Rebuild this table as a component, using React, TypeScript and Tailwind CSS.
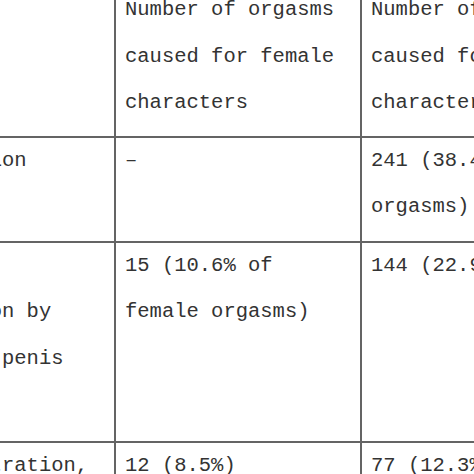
import React from 'react';

type Row = { cells: string[]; pad: string };

const rows: Row[] = [
    {
        cells: ['Sex act', 'Number of orgasms caused for female characters', 'Number of orgasms caused for male characters'],
        pad: 'pb-[9px]',
    },
    {
        cells: ['Masturbation', '\u2013', '241 (38.4% of male orgasms)'],
        pad: 'pb-[10px]',
    },
    {
        cells: ["Vaginal penetration by another's penis (PIV)", '15 (10.6% of female orgasms)', '144 (22.9%)'],
        pad: 'pb-[12px]',
    },
    {
        cells: ['Anal penetration, fingering', '12 (8.5%)', '77 (12.3%)'],
        pad: 'pb-[12px]',
    },
];

const App: React.FC = () => {
    return (
        <div className="w-[474px] h-[474px] overflow-hidden bg-white">
            <div className="ml-[-130px] mt-[-13px] w-[740px] font-['Liberation_Mono','Courier_New',monospace] text-[20.5px] leading-[46.5px] text-[#333333]">
                {rows.map((row, i) => (
                    <div key={i} className="grid grid-cols-[246px_246px_246px] border-b-2 border-[#646464]">
                        {row.cells.map((cell, j) => (
                            <div key={j} className={`border-r-2 border-[#646464] pl-[9px] pr-[10px] pt-0 ${row.pad}`}>
                                {cell}
                            </div>
                        ))}
                    </div>
                ))}
            </div>
        </div>
    );
};

export default App;
